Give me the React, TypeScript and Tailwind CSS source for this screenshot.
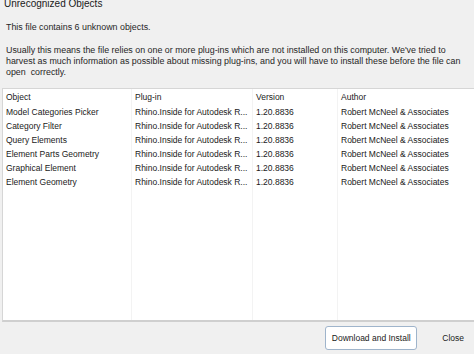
import React from 'react';

interface MissingObject {
  name: string;
  plugin: string;
  version: string;
  author: string;
}

const objects: MissingObject[] = [
  { name: 'Model Categories Picker', plugin: 'Rhino.Inside for Autodesk R...', version: '1.20.8836', author: 'Robert McNeel & Associates' },
  { name: 'Category Filter', plugin: 'Rhino.Inside for Autodesk R...', version: '1.20.8836', author: 'Robert McNeel & Associates' },
  { name: 'Query Elements', plugin: 'Rhino.Inside for Autodesk R...', version: '1.20.8836', author: 'Robert McNeel & Associates' },
  { name: 'Element Parts Geometry', plugin: 'Rhino.Inside for Autodesk R...', version: '1.20.8836', author: 'Robert McNeel & Associates' },
  { name: 'Graphical Element', plugin: 'Rhino.Inside for Autodesk R...', version: '1.20.8836', author: 'Robert McNeel & Associates' },
  { name: 'Element Geometry', plugin: 'Rhino.Inside for Autodesk R...', version: '1.20.8836', author: 'Robert McNeel & Associates' },
];

const Cell: React.FC<{ className?: string; children: React.ReactNode }> = ({ className = '', children }) => (
  <div className={`px-[3px] whitespace-nowrap overflow-hidden ${className}`}>{children}</div>
);

const App: React.FC = () => {
  return (
    <div className="w-[474px] h-[354px] overflow-hidden bg-[#f0f0f0] text-[#1a1a1a] font-['Liberation_Sans',Arial,sans-serif] text-[8.5px] flex flex-col">
      {/* title, clipped at the top edge */}
      <div className="h-[10px] -mt-[2px] pl-[4px] leading-[12px] text-[10px]">Unrecognized Objects</div>

      {/* message label */}
      <div className="mt-[14.4px] pl-[6px] leading-[11.2px] text-[8.9px] text-[#262626] whitespace-nowrap">
        <p>This file contains 6 unknown objects.</p>
        <p className="mt-[11.2px]">
          Usually this means the file relies on one or more plug-ins which are not installed on this computer. We've tried to
          <br />
          harvest as much information as possible about missing plug-ins, and you will have to install these before the file can
          <br />
          open&nbsp; correctly.
        </p>
      </div>

      {/* object table */}
      <div className="mt-[9.6px] ml-[2px] h-[234px] bg-white border-t border-l border-[#d6d6d6] border-b-2 border-b-[#cfcfcf] flex">
        <div className="w-[129px] border-r border-[#f3f3f3] flex flex-col">
          <Cell className="h-[16px] leading-[16px]">Object</Cell>
          {objects.map((o) => (
            <Cell key={o.name} className="h-[14px] leading-[14px]">{o.name}</Cell>
          ))}
        </div>
        <div className="w-[121px] border-r border-[#f3f3f3] flex flex-col">
          <Cell className="h-[16px] leading-[16px]">Plug-in</Cell>
          {objects.map((o) => (
            <Cell key={o.name} className="h-[14px] leading-[14px]">{o.plugin}</Cell>
          ))}
        </div>
        <div className="w-[85px] border-r border-[#f3f3f3] flex flex-col">
          <Cell className="h-[16px] leading-[16px]">Version</Cell>
          {objects.map((o) => (
            <Cell key={o.name} className="h-[14px] leading-[14px]">{o.version}</Cell>
          ))}
        </div>
        <div className="flex-1 flex flex-col">
          <Cell className="h-[16px] leading-[16px]">Author</Cell>
          {objects.map((o) => (
            <Cell key={o.name} className="h-[14px] leading-[14px]">{o.author}</Cell>
          ))}
        </div>
      </div>

      {/* footer buttons */}
      <div className="flex-1 flex justify-end items-start pt-[4px]">
        <button className="w-[92px] h-[24px] bg-white border border-[#9fb4cb] rounded-[3px] text-[#1a1a1a] leading-[22px]">
          Download and Install
        </button>
        <button className="ml-[25px] mr-[10px] h-[24px] leading-[24px] text-[#1a1a1a]">Close</button>
      </div>
    </div>
  );
};

export default App;
